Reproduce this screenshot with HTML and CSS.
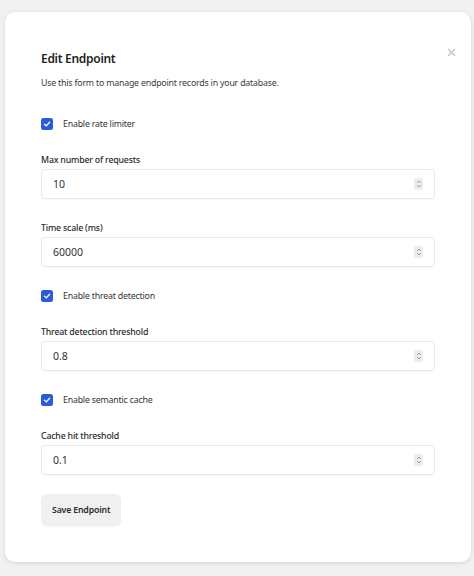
FILE: index.html
```html
<!DOCTYPE html>
<html>
<head>
<meta charset="utf-8">
<link rel="stylesheet" href="styles.css">
</head>
<body>
<div class="card">
  <button class="close" aria-label="Close">
    <svg width="9" height="9" viewBox="0 0 9 9"><path d="M1 1L8 8M8 1L1 8" stroke="#c4c4c4" stroke-width="1.2" fill="none"/></svg>
  </button>
  <h1 class="title">Edit Endpoint</h1>
  <p class="desc">Use this form to manage endpoint records in your database.</p>
  <div class="form">
    <label class="check"><span class="box"><svg width="8" height="8" viewBox="0 0 8 8"><path d="M1.5 4.2L3.3 5.9L6.6 2.2" stroke="#fff" stroke-width="1.3" fill="none" stroke-linecap="round" stroke-linejoin="round"/></svg></span>Enable rate limiter</label>
    <div class="field">
      <span class="label">Max number of requests</span>
      <div class="input"><span>10</span><span class="spin"><svg width="6" height="10" viewBox="0 0 6 10"><path d="M1.2 3.8L3 2L4.8 3.8M1.2 6.2L3 8L4.8 6.2" stroke="#8a8a8a" stroke-width="0.9" fill="none"/></svg></span></div>
    </div>
    <div class="field">
      <span class="label">Time scale (ms)</span>
      <div class="input"><span>60000</span><span class="spin"><svg width="6" height="10" viewBox="0 0 6 10"><path d="M1.2 3.8L3 2L4.8 3.8M1.2 6.2L3 8L4.8 6.2" stroke="#8a8a8a" stroke-width="0.9" fill="none"/></svg></span></div>
    </div>
    <label class="check"><span class="box"><svg width="8" height="8" viewBox="0 0 8 8"><path d="M1.5 4.2L3.3 5.9L6.6 2.2" stroke="#fff" stroke-width="1.3" fill="none" stroke-linecap="round" stroke-linejoin="round"/></svg></span>Enable threat detection</label>
    <div class="field">
      <span class="label">Threat detection threshold</span>
      <div class="input"><span>0.8</span><span class="spin"><svg width="6" height="10" viewBox="0 0 6 10"><path d="M1.2 3.8L3 2L4.8 3.8M1.2 6.2L3 8L4.8 6.2" stroke="#8a8a8a" stroke-width="0.9" fill="none"/></svg></span></div>
    </div>
    <label class="check"><span class="box"><svg width="8" height="8" viewBox="0 0 8 8"><path d="M1.5 4.2L3.3 5.9L6.6 2.2" stroke="#fff" stroke-width="1.3" fill="none" stroke-linecap="round" stroke-linejoin="round"/></svg></span>Enable semantic cache</label>
    <div class="field">
      <span class="label">Cache hit threshold</span>
      <div class="input"><span>0.1</span><span class="spin"><svg width="6" height="10" viewBox="0 0 6 10"><path d="M1.2 3.8L3 2L4.8 3.8M1.2 6.2L3 8L4.8 6.2" stroke="#8a8a8a" stroke-width="0.9" fill="none"/></svg></span></div>
    </div>
    <div class="actions"><button class="save">Save Endpoint</button></div>
  </div>
</div>
</body>
</html>
```
FILE: styles.css
```css
html, body {
  margin: 0;
  padding: 0;
  background: #f1f1f1;
}
body {
  padding: 12px 3px 14px 5px;
  font-family: "Noto Sans", "Open Sans", sans-serif;
  color: #2b2b2b;
}
.card {
  position: relative;
  background: #fff;
  border-radius: 10px;
  box-shadow: 0 1px 4px rgba(0,0,0,0.12);
  padding: 38px 36px 36px 36px;
  box-sizing: border-box;
  height: 550px;
}
.close {
  position: absolute;
  top: 33px;
  right: 15px;
  border: 0;
  background: none;
  padding: 0;
  width: 10px;
  height: 10px;
}
.title {
  margin: 0;
  font-size: 12px;
  letter-spacing: -0.3px;
  line-height: 18px;
  font-weight: 600;
  color: #222;
}
.desc {
  margin: 8px 0 0;
  font-size: 8.8px;
  letter-spacing: -0.2px;
  line-height: 14px;
  color: #3a3a3a;
}
.form {
  display: flex;
  flex-direction: column;
  gap: 22px;
  margin-top: 27px;
}
.check {
  display: flex;
  align-items: center;
  gap: 10px;
  font-size: 8.8px;
  letter-spacing: -0.2px;
  line-height: 14px;
  color: #333;
}
.box {
  width: 12px;
  height: 12px;
  border-radius: 2.5px;
  background: #2b5bd6;
  display: flex;
  align-items: center;
  justify-content: center;
}
.field {
  display: flex;
  flex-direction: column;
  gap: 1px;
}
.label {
  font-size: 8.8px;
  letter-spacing: -0.2px;
  line-height: 15px;
  font-weight: 500;
  color: #2b2b2b;
}
.input {
  height: 30px;
  box-sizing: border-box;
  border: 1px solid #e9e9e9;
  border-radius: 4px;
  box-shadow: 0 1px 1px rgba(0,0,0,0.03);
  display: flex;
  align-items: center;
  justify-content: space-between;
  padding: 0 11px 0 11px;
  font-size: 10.5px;
  color: #333;
}
.spin {
  width: 9px;
  height: 12px;
  background: #ececec;
  border-radius: 2px;
  display: flex;
  align-items: center;
  justify-content: center;
}
.actions {
  margin-top: -3px;
}
.save {
  border: 0;
  background: #f0f0f0;
  border-radius: 6px;
  height: 32px;
  padding: 0 11px;
  font-family: inherit;
  font-size: 8.8px;
  letter-spacing: -0.2px;
  font-weight: 600;
  color: #2b2b2b;
  box-shadow: 0 1px 1px rgba(0,0,0,0.04);
}
```
